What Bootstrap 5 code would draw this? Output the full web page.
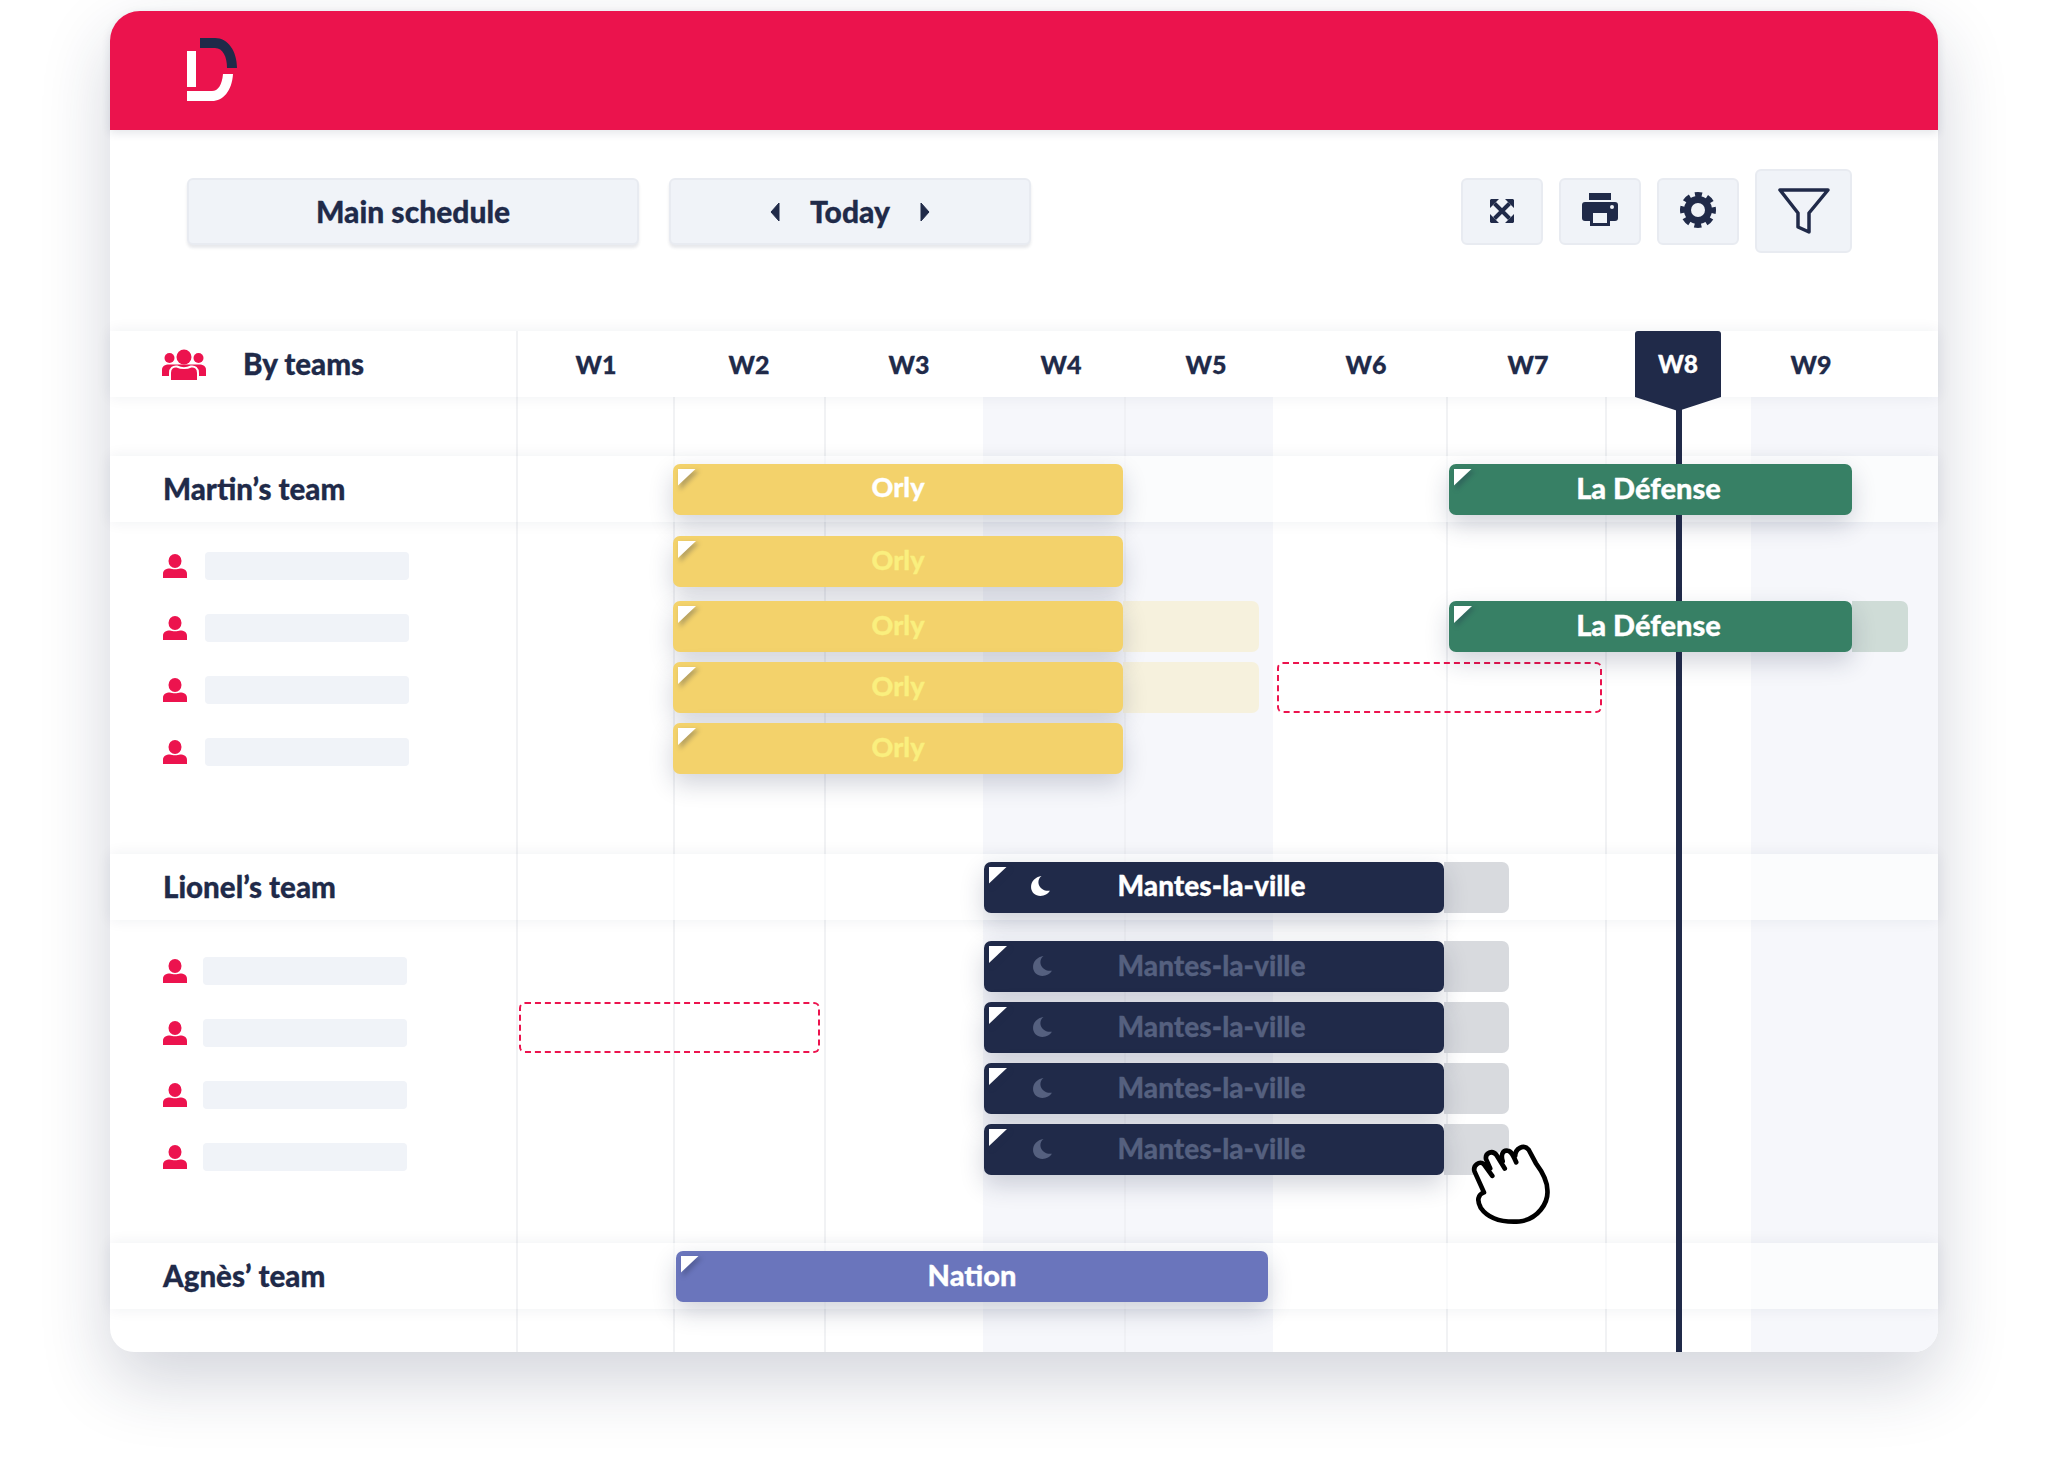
<!DOCTYPE html>
<html lang="en">
<head>
    <meta charset="UTF-8">
    <meta name="viewport" content="width=device-width, initial-scale=1">
    <title>Main schedule</title>
    <link href="https://cdn.jsdelivr.net/npm/bootstrap@5.3.0/dist/css/bootstrap.min.css" rel="stylesheet">
    <style>
        body {
            background: #fff;
            color: #202a49;
            font-family: "Lato", "Liberation Sans", sans-serif;
            font-weight: 900;
            -webkit-text-stroke: .3px currentColor;
            min-height: 1468px;
        }
        .app-shell {
            width: 1828px;
            height: 1341px;
            margin: 11px 0 0 110px;
            background: #fff;
            border-radius: 30px 30px 24px 24px;
            box-shadow: 0 28px 70px rgba(32, 42, 73, .2);
        }
        .app-top {
            height: 119px;
            background: #eb134d;
            border-radius: 30px 30px 0 0;
            padding: 26px 0 0 77px;
            box-shadow: 0 3px 10px rgba(32, 42, 73, .12);
        }
        .app-tools {
            height: 201px;
            padding: 39px 86px 0 77px;
        }
        .tool-group { padding-top: 9px; gap: 30px; }
        .tool-btn {
            height: 67px;
            display: flex;
            align-items: center;
            justify-content: center;
            background: #f0f3f8;
            border: 2px solid #e8ebf1;
            border-radius: 6px;
            color: #202a49;
            font-weight: 900;
            font-size: 30px;
            padding: 0;
        }
        .tool-wide { box-shadow: 0 3px 3px rgba(32, 42, 73, .1); }
        .tool-main { width: 452px; }
        .tool-today { width: 362px; gap: 30px; }
        .tool-icon { width: 82px; }
        .tool-icon .icon-raised { margin-bottom: 3px; }
        .tool-filter { width: 97px; height: 84px; }

        .board {
            position: relative;
            height: 1021px;
            border-radius: 0 0 24px 24px;
            background: linear-gradient(90deg,
                transparent 406px, #f1f2f4 406px, #f1f2f4 408px, transparent 408px,
                transparent 563px, #f1f2f4 563px, #f1f2f4 565px, transparent 565px,
                transparent 714px, #f1f2f4 714px, #f1f2f4 716px, transparent 716px,
                transparent 873px, #f6f7fb 873px, #f6f7fb 1014px, #f0f1f5 1014px, #f0f1f5 1016px,
                #f6f7fb 1016px, #f6f7fb 1163px, transparent 1163px,
                transparent 1336px, #f1f2f4 1336px, #f1f2f4 1338px, transparent 1338px,
                transparent 1495px, #f1f2f4 1495px, #f1f2f4 1497px, transparent 1497px,
                transparent 1641px, #f6f7fb 1641px, #f6f7fb 1828px);
        }
        .week-head {
            height: 66px;
            background: #fff;
            box-shadow: 0 0 14px rgba(32, 42, 73, .07);
            position: relative;
        }
        .side-cell {
            width: 406px;
            flex-shrink: 0;
            box-shadow: 2px 0 0 #f1f2f4;
        }
        .head-title {
            font-size: 29.5px;
            padding-left: 52px;
            gap: 37px;
        }
        .week-cols {
            flex-grow: 1;
            display: grid;
            grid-template-columns: 156px 150px 170px 134px 156px 164px 160px 140px 126px;
            padding-left: 2px;
            font-size: 25px;
            line-height: 66px;
            text-align: center;
        }
        .week-now {
            width: 86px;
            height: 66px;
            margin: 0 auto;
            background: #202a49;
            color: #fff;
            border-radius: 3px 3px 0 0;
            font-size: 24.5px;
            position: relative;
            z-index: 3;
        }
        .week-now::after {
            content: "";
            position: absolute;
            left: 0;
            top: 66px;
            width: 86px;
            height: 14px;
            background: #202a49;
            clip-path: polygon(0 0, 100% 0, 50% 100%);
        }
        .now-line {
            position: absolute;
            left: 1566px;
            top: 70px;
            bottom: 0;
            width: 6px;
            background: #202a49;
            z-index: 1;
        }
        .head-gap { height: 59px; }
        .team-band {
            height: 66px;
            background: rgba(255, 255, 255, .6);
            box-shadow: 0 0 14px rgba(32, 42, 73, .07);
            position: relative;
        }
        .team-name {
            font-size: 29.5px;
            padding-left: 53px;
            line-height: 66px;
        }
        .crew-martin { height: 332px; }
        .crew-lionel { height: 323px; }
        .crew-side {
            padding: 30px 0 0 53px;
            gap: 34px;
        }
        .crew-lionel .crew-side { padding-top: 37px; }
        .crew-person { height: 28px; gap: 18px; }
        .crew-lionel .crew-person { gap: 16px; }
        .person-blank {
            width: 204px;
            height: 28px;
            background: #f0f3f8;
            border-radius: 4px;
        }
        .crew-tracks { padding-top: 14px; gap: 10px; flex-grow: 1; }
        .crew-lionel .crew-tracks { padding-top: 21px; }
        .crew-tracks .track-row:first-child { margin-bottom: 4px; }
        .crew-lionel .crew-tracks .track-row:first-child { margin-bottom: 0; }
        .track-row {
            height: 51px;
            display: flex;
            align-items: center;
            flex: 0 0 auto;
        }
        .band-track { flex-grow: 1; height: 66px; }
        .plan-bar {
            height: 51px;
            flex-shrink: 0;
            position: relative;
            z-index: 2;
            border-radius: 7px;
            color: #fff;
            font-size: 29px;
            padding-bottom: 3px;
            display: flex;
            align-items: center;
            justify-content: center;
            box-shadow: 0 10px 24px rgba(32, 42, 73, .2);
        }
        .plan-bar::before {
            content: "";
            position: absolute;
            left: 7px;
            top: 7px;
            width: 20px;
            height: 19px;
            background: linear-gradient(135deg, rgba(32, 42, 73, .28) 50%, transparent 50%);
            filter: blur(2px);
        }
        .plan-bar::after {
            content: "";
            position: absolute;
            left: 5px;
            top: 5px;
            width: 18px;
            height: 17px;
            background: #fff;
            clip-path: polygon(0 0, 100% 0, 0 100%);
        }
        .bar-yellow { background: #f3d26b; font-size: 27px; }
        .bar-yellow.bar-dim { color: #faef7e; }
        .bar-green { background: #378065; padding-right: 4px; }
        .bar-navy {
            background: #202a49;
            font-size: 28px;
            padding: 0 72px 4px 46px;
            justify-content: flex-start;
        }
        .bar-navy svg { width: 21px; height: 21px; margin-top: 3px; }
        .bar-navy .bar-text { flex-grow: 1; text-align: center; }
        .bar-navy.bar-dim { color: #55607f; }
        .bar-navy.bar-dim svg { margin-left: 2px; margin-right: -2px; }
        .bar-blue { background: #6a75bc; }
        .bar-ghost {
            height: 51px;
            flex-shrink: 0;
            border-radius: 0 7px 7px 0;
        }
        .ghost-yellow { background: #f6f1dd; }
        .ghost-green { background: #cfdcd7; }
        .ghost-navy { background: #d8dade; }
        .slot-dashed {
            height: 51px;
            flex-shrink: 0;
            border: 2px dashed #ec134e;
            border-radius: 6px;
        }
        .tail-gap { height: 42px; }
        .grab-hand {
            position: absolute;
            left: 1349px;
            top: 799px;
            z-index: 4;
        }
    </style>
</head>
<body>

<svg width="0" height="0" class="d-block">
    <symbol id="ico-person" viewBox="0 0 24 24">
        <ellipse cx="12" cy="7" rx="6.5" ry="7" fill="#ec134e"/>
        <path d="M0 24V20C0 16 3 14.500 7 14.500C9 15.500 15 15.500 17 14.500C21 14.500 24 16 24 20V24Z" fill="#ec134e"/>
    </symbol>
    <symbol id="ico-moon" viewBox="0 0 20 20">
        <path d="M11 0C5 1 1 5 1 10.500C1 15.500 5 19 10 19C14 19 17 17 19 14C13 15 8 11 8 6C8 3.500 9 1.500 11 0Z" fill="currentColor"/>
    </symbol>
</svg>

<div class="app-shell">
    <div class="app-top">
        <svg width="50" height="65" viewBox="0 0 50 65">
            <rect x="0" y="14" width="9" height="36" fill="#fff"/>
            <path d="M0 54H25C31 54 35 48 36 37H46C45 54 36 64 25 64H0Z" fill="#fff"/>
            <path d="M13 1H28C41 1 50 14 50 31H40C40 20 36 11 28 11H13Z" fill="#202a49"/>
        </svg>
    </div>

    <div class="app-tools d-flex align-items-start justify-content-between">
        <div class="tool-group d-flex align-items-center">
            <button type="button" class="btn tool-btn tool-wide tool-main">Main schedule</button>
            <button type="button" class="btn tool-btn tool-wide tool-today">
                <svg width="10" height="20" viewBox="0 0 10 20"><path d="M9 1V19L1 10Z" fill="#202a49" stroke="#202a49" stroke-linejoin="round"/></svg>
                <span>Today</span>
                <svg width="10" height="20" viewBox="0 0 10 20"><path d="M1 1V19L9 10Z" fill="#202a49" stroke="#202a49" stroke-linejoin="round"/></svg>
            </button>
        </div>
        <div class="d-flex align-items-center gap-3">
            <button type="button" class="btn tool-btn tool-icon" aria-label="Expand">
                <svg width="24" height="24" viewBox="0 0 24 24">
                    <path d="M4.500 4.500L19.500 19.500M19.500 4.500L4.500 19.500" stroke="#202a49" stroke-width="4"/>
                    <path d="M1 0H9L0 9V1ZM15 0H23L24 1V9ZM0 15L9 24H1L0 23ZM24 15V23L23 24H15Z" fill="#202a49"/>
                </svg>
            </button>
            <button type="button" class="btn tool-btn tool-icon" aria-label="Print">
                <svg class="icon-raised" width="36" height="33" viewBox="0 0 36 33">
                    <rect x="7" y="0" width="22" height="7" fill="#202a49"/>
                    <rect x="0" y="9" width="36" height="19" rx="3" fill="#202a49"/>
                    <rect x="8" y="19" width="20" height="14" fill="#202a49"/>
                    <rect x="11" y="20" width="14" height="10" fill="#f0f3f8"/>
                    <circle cx="30" cy="14" r="2" fill="#f0f3f8"/>
                </svg>
            </button>
            <button type="button" class="btn tool-btn tool-icon" aria-label="Settings">
                <svg class="icon-raised" width="36" height="36" viewBox="-18 -18 36 36">
                    <circle r="14" fill="#202a49"/>
                    <circle r="15.500" fill="none" stroke="#202a49" stroke-width="5" stroke-dasharray="7 5.170" stroke-dashoffset="3.500"/>
                    <circle r="7" fill="#f0f3f8"/>
                </svg>
            </button>
            <button type="button" class="btn tool-btn tool-filter" aria-label="Filter">
                <svg width="54" height="48" viewBox="0 0 54 48">
                    <path d="M3 3H51L32 26V45L21 40V26Z" fill="none" stroke="#202a49" stroke-width="3.500" stroke-linejoin="round"/>
                </svg>
            </button>
        </div>
    </div>

    <div class="board">
        <div class="week-head d-flex">
            <div class="side-cell head-title d-flex align-items-center">
                <svg width="44" height="34" viewBox="0 0 44 34">
                    <circle cx="7.500" cy="11" r="5" fill="#ec134e"/>
                    <circle cx="36.500" cy="11" r="5" fill="#ec134e"/>
                    <path d="M0 29V23C0 19 3 17.500 7 17.500H37C41 17.500 44 19 44 23V29Z" fill="#ec134e"/>
                    <circle cx="22" cy="10" r="7.500" fill="#ec134e"/>
                    <path d="M8 34V26C8 21 11 19 15 19.500C19 21.500 25 21.500 29 19.500C33 19 36 21 36 26V34Z" fill="#ec134e" stroke="#fff" stroke-width="2"/>
                </svg>
                <span>By teams</span>
            </div>
            <div class="week-cols">
                <div>W1</div><div>W2</div><div>W3</div><div>W4</div><div>W5</div><div>W6</div><div>W7</div>
                <div><div class="week-now">W8</div></div>
                <div>W9</div>
            </div>
        </div>
        <div class="now-line"></div>
        <div class="head-gap"></div>

        <div class="team-band d-flex">
            <div class="side-cell team-name">Martin’s team</div>
            <div class="band-track track-row">
                <div class="plan-bar bar-yellow" style="margin-left:157px;width:450px">Orly</div>
                <div class="plan-bar bar-green" style="margin-left:326px;width:403px">La Défense</div>
            </div>
        </div>
        <div class="crew-martin d-flex">
            <div class="side-cell crew-side d-flex flex-column">
                <div class="crew-person d-flex align-items-center"><svg width="24" height="24"><use href="#ico-person"/></svg><div class="person-blank"></div></div>
                <div class="crew-person d-flex align-items-center"><svg width="24" height="24"><use href="#ico-person"/></svg><div class="person-blank"></div></div>
                <div class="crew-person d-flex align-items-center"><svg width="24" height="24"><use href="#ico-person"/></svg><div class="person-blank"></div></div>
                <div class="crew-person d-flex align-items-center"><svg width="24" height="24"><use href="#ico-person"/></svg><div class="person-blank"></div></div>
            </div>
            <div class="crew-tracks d-flex flex-column">
                <div class="track-row">
                    <div class="plan-bar bar-yellow bar-dim" style="margin-left:157px;width:450px">Orly</div>
                </div>
                <div class="track-row">
                    <div class="plan-bar bar-yellow bar-dim" style="margin-left:157px;width:450px">Orly</div>
                    <div class="bar-ghost ghost-yellow" style="width:136px"></div>
                    <div class="plan-bar bar-green" style="margin-left:190px;width:403px">La Défense</div>
                    <div class="bar-ghost ghost-green" style="width:56px"></div>
                </div>
                <div class="track-row">
                    <div class="plan-bar bar-yellow bar-dim" style="margin-left:157px;width:450px">Orly</div>
                    <div class="bar-ghost ghost-yellow" style="width:136px"></div>
                    <div class="slot-dashed" style="margin-left:18px;width:325px"></div>
                </div>
                <div class="track-row">
                    <div class="plan-bar bar-yellow bar-dim" style="margin-left:157px;width:450px">Orly</div>
                </div>
            </div>
        </div>

        <div class="team-band d-flex">
            <div class="side-cell team-name">Lionel’s team</div>
            <div class="band-track track-row">
                <div class="plan-bar bar-navy" style="margin-left:468px;width:460px">
                    <svg><use href="#ico-moon"/></svg><span class="bar-text">Mantes-la-ville</span>
                </div>
                <div class="bar-ghost ghost-navy" style="width:65px"></div>
            </div>
        </div>
        <div class="crew-lionel d-flex">
            <div class="side-cell crew-side d-flex flex-column">
                <div class="crew-person d-flex align-items-center"><svg width="24" height="24"><use href="#ico-person"/></svg><div class="person-blank"></div></div>
                <div class="crew-person d-flex align-items-center"><svg width="24" height="24"><use href="#ico-person"/></svg><div class="person-blank"></div></div>
                <div class="crew-person d-flex align-items-center"><svg width="24" height="24"><use href="#ico-person"/></svg><div class="person-blank"></div></div>
                <div class="crew-person d-flex align-items-center"><svg width="24" height="24"><use href="#ico-person"/></svg><div class="person-blank"></div></div>
            </div>
            <div class="crew-tracks d-flex flex-column">
                <div class="track-row">
                    <div class="plan-bar bar-navy bar-dim" style="margin-left:468px;width:460px">
                        <svg><use href="#ico-moon"/></svg><span class="bar-text">Mantes-la-ville</span>
                    </div>
                    <div class="bar-ghost ghost-navy" style="width:65px"></div>
                </div>
                <div class="track-row">
                    <div class="slot-dashed" style="margin-left:3px;width:301px"></div>
                    <div class="plan-bar bar-navy bar-dim" style="margin-left:164px;width:460px">
                        <svg><use href="#ico-moon"/></svg><span class="bar-text">Mantes-la-ville</span>
                    </div>
                    <div class="bar-ghost ghost-navy" style="width:65px"></div>
                </div>
                <div class="track-row">
                    <div class="plan-bar bar-navy bar-dim" style="margin-left:468px;width:460px">
                        <svg><use href="#ico-moon"/></svg><span class="bar-text">Mantes-la-ville</span>
                    </div>
                    <div class="bar-ghost ghost-navy" style="width:65px"></div>
                </div>
                <div class="track-row">
                    <div class="plan-bar bar-navy bar-dim" style="margin-left:468px;width:460px">
                        <svg><use href="#ico-moon"/></svg><span class="bar-text">Mantes-la-ville</span>
                    </div>
                    <div class="bar-ghost ghost-navy" style="width:65px"></div>
                </div>
            </div>
        </div>

        <div class="team-band d-flex">
            <div class="side-cell team-name">Agnès’ team</div>
            <div class="band-track track-row">
                <div class="plan-bar bar-blue" style="margin-left:160px;width:592px">Nation</div>
            </div>
        </div>
        <div class="tail-gap d-flex"><div class="side-cell"></div></div>

        <svg class="grab-hand" width="104" height="104" viewBox="0 0 100 100">
            <path d="M54 25C54 18 62 13 67 19L74 32C80 40 85 48 85 58C86 70 76 86 58 88C42 89 28 85 21 75C17 68 18 62 24 60L15 40C13 34 20 29 24 33C25 22 32 19 36 24C40 18 50 17 54 25Z" fill="#fff"/>
            <path d="M24 60L15 40C13 34 20 29 24 33L32 44M30 37L26 28C25 22 32 19 36 24L44 37M42 30C40 24 42 19 47 20C50 20 52 24 55 31M54 25C54 18 62 13 67 19L74 32C80 40 85 48 85 58C86 70 76 86 58 88C42 89 28 85 21 75C17 68 18 62 24 60" fill="none" stroke="#000" stroke-width="4.500" stroke-linecap="round" stroke-linejoin="round"/>
        </svg>
    </div>
</div>

<script src="https://cdn.jsdelivr.net/npm/bootstrap@5.3.0/dist/js/bootstrap.bundle.min.js"></script>
</body>
</html>
